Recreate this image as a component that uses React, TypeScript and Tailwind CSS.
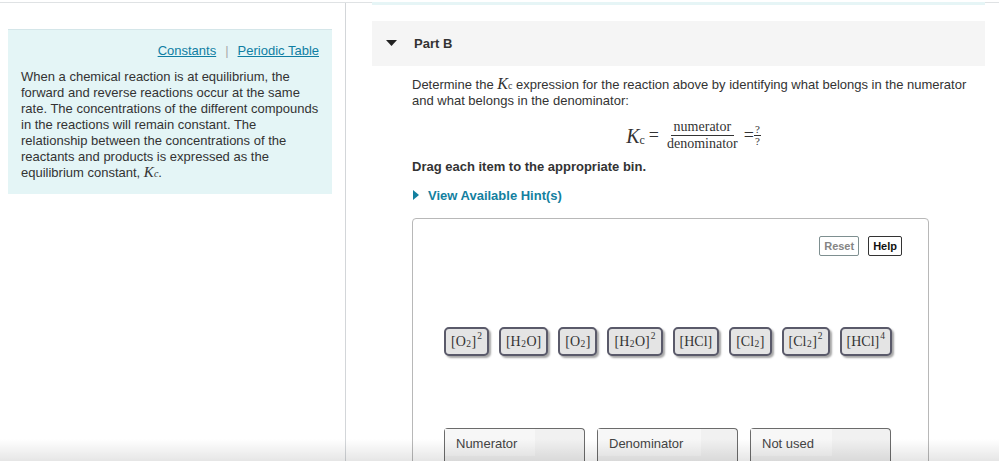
import type { ReactNode } from 'react';

const serif = { fontFamily: '"Liberation Serif", "DejaVu Serif", serif' };

function Chip({ children }: { children: ReactNode }) {
  return (
    <div className="flex h-[29px] items-center rounded-[5px] border-2 border-[#5a5a6a] bg-[#e4e4e4] px-[5px] text-[14px] leading-none text-[#333] shadow-[2px_2px_2px_rgba(0,0,0,0.35)] font-['Liberation_Serif',serif]">
      {children}
    </div>
  );
}

function Sub({ children }: { children: ReactNode }) {
  return <span className="inline-block translate-y-[3px] text-[9.5px] mx-[0.5px]">{children}</span>;
}

function Sup({ children }: { children: ReactNode }) {
  return <span className="inline-block -translate-y-[5px] text-[9.5px] ml-[1px]">{children}</span>;
}

function Bin({ label }: { label: string }) {
  return (
    <div className="h-[40px] w-[141px] rounded-t-[4px] border border-b-0 border-[#6b6b6b] bg-[#f1f1f1]">
      <div className="inline-block bg-[#f7f7f7] pl-[11px] pr-[18px] pt-[5px] pb-[2px] text-[13px] text-[#444]">{label}</div>
    </div>
  );
}

export default function App() {
  return (
    <div className="relative h-[461px] w-[999px] overflow-hidden bg-white text-[#333] font-['Liberation_Sans',Arial,sans-serif]">
      <div className="mt-[2px] flex h-full border-t border-[#dfe2e4]">
        {/* left column */}
        <div className="w-[346px] shrink-0 border-r border-[#d3d6d9] pt-[26px] pl-[8px] pr-[13px]">
          <div className="w-[324px] border-t border-[#d4e6e9] bg-[#e4f5f6] px-[13px] pt-[13px] pb-[13px]">
            <div className="flex justify-end gap-[9px] text-[13px] leading-[16px]">
              <a href="#" className="text-[#0f7ea3] underline">Constants</a>
              <span className="text-[#aaa]">|</span>
              <a href="#" className="text-[#0f7ea3] underline">Periodic Table</a>
            </div>
            <p className="mt-[10px] text-[13px] leading-[16px] text-[#333]">
              When a chemical reaction is at equilibrium, the forward and reverse reactions occur at the same rate. The concentrations of the different compounds in the reactions will remain constant. The relationship between the concentrations of the reactants and products is expressed as the equilibrium constant,{' '}
              <span style={serif} className="italic text-[15px] leading-none">
                K<span className="text-[10px]">c</span>
              </span>
              .
            </p>
          </div>
        </div>

        {/* right column */}
        <div className="w-[613px] shrink-0 ml-[26px]">
          <div className="h-[3px] -mt-[1px] bg-[#e6f5f6]" />
          <div className="mt-[16px] flex h-[45px] items-center bg-[#f5f5f5] pl-[14px]">
            <svg width="11" height="7" viewBox="0 0 11 7" className="mr-[17px]">
              <path d="M0 0 L11 0 L5.5 6 Z" fill="#222" />
            </svg>
            <span className="text-[13px] font-bold text-[#333]">Part B</span>
          </div>

          <div className="pl-[40px] pr-[10px]">
            <p className="mt-[10px] text-[13px] leading-[16px] text-[#333]">
              Determine the{' '}
              <span style={serif} className="italic text-[16px] leading-none">
                K<span className="not-italic text-[10px]">c</span>
              </span>{' '}
              expression for the reaction above by identifying what belongs in the numerator and what belongs in the denominator:
            </p>

            <div className="mt-[11px] flex items-center justify-center text-[#333]" style={serif}>
              <span className="italic text-[20px]">K</span>
              <span className="text-[12px] mt-[8px] mr-[4px]">c</span>
              <span className="text-[18px] mr-[8px]">=</span>
              <span className="flex flex-col items-center text-[14px] leading-[14px]">
                <span className="border-b border-[#333] px-[3px] pb-[1px]">numerator</span>
                <span className="pt-[1px]">denominator</span>
              </span>
              <span className="text-[18px] ml-[6px]">=</span>
              <span className="flex flex-col items-center text-[11px] leading-[11px]">
                <span className="border-b border-[#333] px-[1px]">?</span>
                <span>?</span>
              </span>
            </div>

            <p className="mt-[6px] text-[13px] font-bold text-[#333]">Drag each item to the appropriate bin.</p>

            <div className="mt-[9px] flex items-center gap-[9px] text-[#13809f]">
              <svg width="6" height="10" viewBox="0 0 6 10" className="ml-[1px]">
                <path d="M0 0 L6 5 L0 10 Z" fill="#13809f" />
              </svg>
              <span className="text-[13px] font-bold">View Available Hint(s)</span>
            </div>

            <div className="mt-[13px] h-[260px] w-[517px] rounded-[4px] border border-[#b8b8b8] px-[31px]">
              <div className="mt-[17px] mr-[-5px] flex justify-end gap-[9px]">
                <button className="h-[20px] rounded-[2px] border border-[#7e8f90] px-[4px] text-[11px] font-bold text-[#858585]">Reset</button>
                <button className="h-[20px] rounded-[2px] border border-[#333] px-[4px] text-[11px] font-bold text-[#111]">Help</button>
              </div>

              <div className="mt-[71px] flex gap-[10px]">
                <Chip>[O<Sub>2</Sub>]<Sup>2</Sup></Chip>
                <Chip>[H<Sub>2</Sub>O]</Chip>
                <Chip>[O<Sub>2</Sub>]</Chip>
                <Chip>[H<Sub>2</Sub>O]<Sup>2</Sup></Chip>
                <Chip>[HCl]</Chip>
                <Chip>[Cl<Sub>2</Sub>]</Chip>
                <Chip>[Cl<Sub>2</Sub>]<Sup>2</Sup></Chip>
                <Chip>[HCl]<Sup>4</Sup></Chip>
              </div>

              <div className="mt-[72px] flex gap-[12px]">
                <Bin label="Numerator" />
                <Bin label="Denominator" />
                <Bin label="Not used" />
              </div>
            </div>
          </div>
        </div>
      </div>

      {/* bottom scroll shade */}
      <div className="pointer-events-none absolute bottom-0 left-0 h-[22px] w-full bg-gradient-to-b from-transparent to-black/10" />
    </div>
  );
}
